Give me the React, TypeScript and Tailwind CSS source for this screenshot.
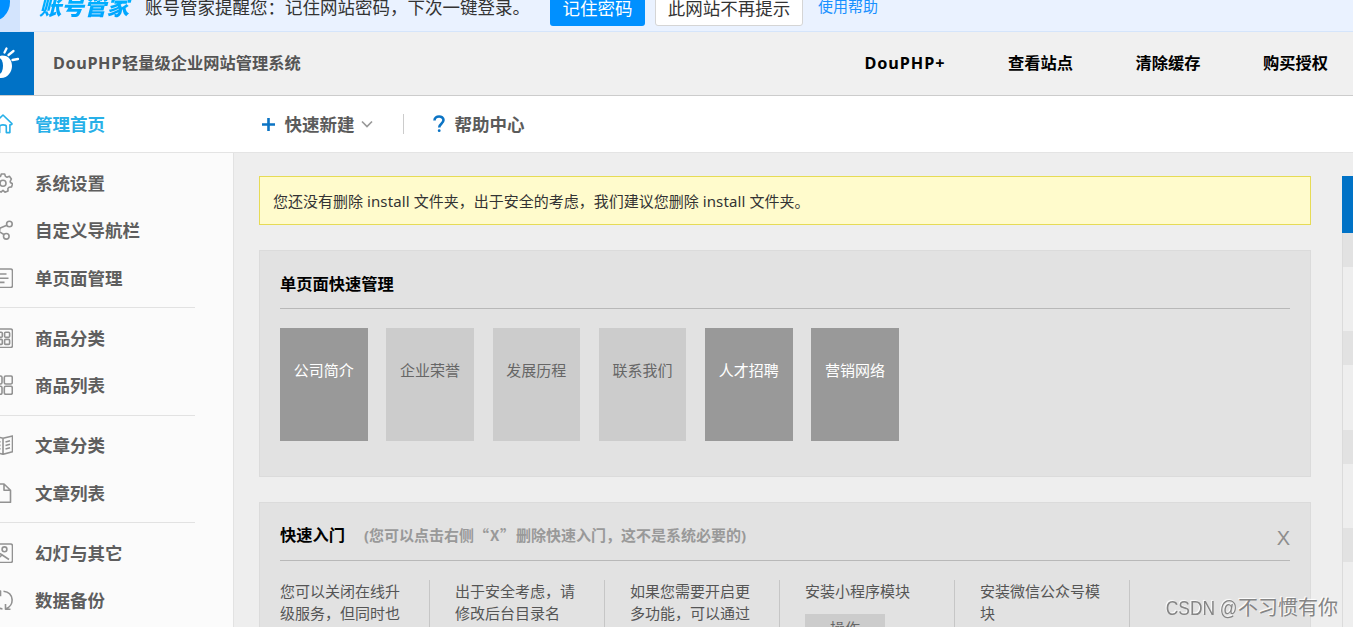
import type { ReactNode } from "react";

type MenuItem = { label: string; icon: ReactNode };

const icons = {
  home: <path d="M1.2 9.6 10 1l8.9 8.6c.3 1-.6 1.4-2 1.300v7.700h-3.600v-6.200c0-2-6.600-2-6.600 0v6.200H3.100v-7.700c-1.400.1-2.300-.3-1.900-1.300Z" />,
  gear: (
    <>
      <path d="M8.300 1h3.400l.7 2.400 1.600.8 2.400-.9 2 2.600-1.200 2.400.2 1.200 2.100 1.300-.9 3.100-2.500.3-1.200 1.300.1 2.500-3 1.200L10 17.300 8 19.100l-3-1.200.1-2.500-1.200-1.300-2.500-.3-.9-3.100 2.100-1.300.2-1.200L1.600 5.900l2-2.600 2.400.9 1.600-.8Z" />
      <circle cx="10" cy="10.200" r="3" />
    </>
  ),
  share: (
    <>
      <circle cx="16.400" cy="4" r="2.800" />
      <circle cx="13.300" cy="16.300" r="2.800" />
      <circle cx="4" cy="9.500" r="2.800" />
      <path d="m13.800 5.200-7.200 3M6 11.500l5.300 3.200" />
    </>
  ),
  page: (
    <>
      <rect x="1" y="1" width="18.500" height="18.500" rx="2" />
      <path d="M4.500 6h9M4.500 10.200h11M4.500 14.400h7" />
    </>
  ),
  category: (
    <>
      <rect x="1" y="1" width="18.500" height="18.500" rx="2" />
      <rect x="4.300" y="4.300" width="5" height="5" rx="1" />
      <rect x="11.600" y="4.300" width="5" height="5" rx="1" />
      <rect x="4.300" y="11.400" width="5" height="5" rx="1" />
      <rect x="11.600" y="11.400" width="5" height="5" rx="1" />
    </>
  ),
  grid: (
    <>
      <rect x="1" y="1" width="8" height="8" rx="1.500" />
      <rect x="11.300" y="1" width="8" height="8" rx="1.500" />
      <rect x="1" y="11.300" width="8" height="8" rx="1.500" />
      <rect x="11.300" y="11.300" width="8" height="8" rx="1.500" />
    </>
  ),
  book: (
    <>
      <path d="M10 3.200 19.500 1v15.800L10 19.300.5 16.800V1L10 3.200Zm0 0v16" />
      <path d="m12.500 7 4.500-1.200M12.500 10.500 17 9.300M12.500 14l4.500-1.200M7.500 7 3 5.800M7.500 10.500 3 9.300M7.500 14 3 12.800" />
    </>
  ),
  file: <path d="M2.500 1H11l6.500 6.300v12h-15V1Zm8.500 0v6.300h6.500" />,
  image: (
    <>
      <rect x="1" y="1" width="18.500" height="18.500" rx="2" />
      <circle cx="11.500" cy="6.300" r="2.400" />
      <path d="m3.500 8.500 5 3 7.500 5M9 12l-5.500 4.500" />
    </>
  ),
  sync: <path d="M10.500 1.200c11 1.500 11 14.500 2.500 17.500M12.500 14v5.200h5M9.500 19c-11-1.500-11-14.500-2.500-17.500M7.500 6.200V1h-5" />,
};

const groups: MenuItem[][] = [
  [
    { label: "系统设置", icon: icons.gear },
    { label: "自定义导航栏", icon: icons.share },
    { label: "单页面管理", icon: icons.page },
  ],
  [
    { label: "商品分类", icon: icons.category },
    { label: "商品列表", icon: icons.grid },
  ],
  [
    { label: "文章分类", icon: icons.book },
    { label: "文章列表", icon: icons.file },
  ],
  [
    { label: "幻灯与其它", icon: icons.image },
    { label: "数据备份", icon: icons.sync },
  ],
];

const pages = [
  { name: "公司简介", top: true },
  { name: "企业荣誉", top: false },
  { name: "发展历程", top: false },
  { name: "联系我们", top: false },
  { name: "人才招聘", top: true },
  { name: "营销网络", top: true },
];

const guides = [
  { lines: ["您可以关闭在线升", "级服务，但同时也"] },
  { lines: ["出于安全考虑，请", "修改后台目录名"] },
  { lines: ["如果您需要开启更", "多功能，可以通过"] },
  { lines: ["安装小程序模块"], action: "操作" },
  { lines: ["安装微信公众号模", "块"] },
];

function MenuIcon({ children }: { children: ReactNode }) {
  return (
    <svg
      className="-ml-[7px] mr-[22px] h-5 w-5 shrink-0"
      viewBox="0 0 20 20"
      fill="none"
      stroke="currentColor"
      strokeWidth="1.6"
      strokeLinejoin="round"
    >
      {children}
    </svg>
  );
}

function PasswordBar() {
  return (
    <div className="flex h-8 shrink-0 overflow-hidden border-b border-[#d5e5fb] bg-[#eaf2ff]">
      <div className="h-8 w-5 shrink-0 bg-[#d3e4fd]">
        <div className="-ml-[30px] -mt-[18px] h-10 w-10 rounded-full bg-[#0090ff]" />
      </div>
      <div className="-mt-[9px] ml-[19px] w-[106px] bg-gradient-to-b from-[#00b7ff] to-[#0099ff] bg-clip-text text-[22.5px] leading-[32px] font-black text-transparent italic">
        账号管家
      </div>
      <div className="-mt-[10px] w-[405px] text-[17.5px] leading-[34px] whitespace-nowrap text-[#333]">
        账号管家提醒您：记住网站密码，下次一键登录。
      </div>
      <button className="-mt-[10px] h-9 w-[95px] rounded-[3px] bg-[#0090ff] text-[17.5px] leading-[34px] text-white">
        记住密码
      </button>
      <button className="-mt-[10px] ml-[10px] h-9 w-[148px] rounded-[3px] border border-[#d5d5d5] bg-white text-[17.5px] leading-[32px] text-[#333]">
        此网站不再提示
      </button>
      <a className="-mt-[10px] ml-[15px] text-[15px] leading-[32px] text-[#1890ff]">使用帮助</a>
    </div>
  );
}

function Header() {
  return (
    <header className="flex h-16 shrink-0 items-center border-b border-[#ccc] bg-[#f0f0f0] text-[16.25px] font-bold">
      <div className="h-full w-[34px] bg-[#0072c6]">
        <svg className="h-[63px] w-[34px]" viewBox="0 0 34 63" fill="none" stroke="#fff">
          <path d="M-6 30a10 10 0 0 1 8-6.500c7 0 10 5 10 10.500S8 46 1 46a13 13 0 0 1-7-2" fill="#fff" stroke="none" />
          <ellipse cx="-1" cy="34" rx="4" ry="8" fill="#0072c6" stroke="none" />
          <path d="m4.500 20.500 2-4M8.500 23l5-4M12.500 28l5.500-1" strokeWidth="2.300" strokeLinecap="round" />
        </svg>
      </div>
      <div className="ml-[19px] text-[#555]">
        <span className="inline-block w-[69px] tracking-[0.6px] whitespace-nowrap">DouPHP</span>轻量级企业网站管理系统
      </div>
      <nav className="mr-[25px] ml-auto flex gap-[62.5px] text-black">
        <a className="w-[81px] whitespace-nowrap tracking-[0.9px]">DouPHP+</a>
        <a>查看站点</a>
        <a>清除缓存</a>
        <a>购买授权</a>
      </nav>
    </header>
  );
}

function Toolbar() {
  return (
    <div className="flex h-[57px] shrink-0 items-center border-b border-[#e4e4e4] bg-white text-[17.5px] font-bold text-[#5b5b5b]">
      <div className="flex w-[261px] items-center text-[#28b0e8]">
        <MenuIcon>{icons.home}</MenuIcon>
        管理首页
      </div>
      <svg className="h-[15px] w-[15px]" viewBox="0 0 15 15" stroke="#0c74c4" strokeWidth="2.600">
        <path d="M7.500 1v13M1 7.500h13" />
      </svg>
      <span className="ml-[8.500px]">快速新建</span>
      <svg className="ml-[6.500px] h-[10px] w-3" viewBox="0 0 12 10" fill="none" stroke="#999" strokeWidth="1.700">
        <path d="m1 2.500 5 5 5-5" />
      </svg>
      <div className="ml-[30px] h-5 w-px bg-[#ccc]" />
      <svg className="ml-[29px] h-[18px] w-3" viewBox="0 0 12 18" fill="none" stroke="#0c74c4" strokeWidth="2.600">
        <path d="M1.500 5.500c0-5.300 9-5.300 9-.4 0 3.600-4.300 3.500-4.300 7.300" />
        <circle cx="6.200" cy="15.700" r="1.400" fill="#0c74c4" stroke="none" />
      </svg>
      <span className="ml-[9.500px]">帮助中心</span>
    </div>
  );
}

function Sidebar() {
  return (
    <aside className="w-[234px] shrink-0 border-r border-[#e2e2e2] bg-[#fbfbfb] text-[17.5px] font-bold text-[#5e5e5e]">
      {groups.map((group, i) => (
        <ul key={i} className="w-[195px] border-b border-[#e2e2e2] pt-[6px] pb-[5.5px]">
          {group.map((item) => (
            <li key={item.label} className="flex h-[47.5px] items-center">
              <span className="flex text-[#929292]">
                <MenuIcon>{item.icon}</MenuIcon>
              </span>
              {item.label}
            </li>
          ))}
        </ul>
      ))}
    </aside>
  );
}

export default function App() {
  return (
    <div className="relative flex h-[627px] w-[1353px] flex-col overflow-hidden bg-[#eee] font-['Noto_Sans','Noto_Sans_CJK_SC',sans-serif]">
      <PasswordBar />
      <Header />
      <Toolbar />
      <div className="flex min-h-0 flex-1 overflow-hidden">
        <Sidebar />
        <main className="ml-[25px] w-[1052px] shrink-0 pt-[23px]">
          <div className="h-[49px] border border-[#e6db55] bg-[#fffbcc] pl-[13px] text-[15px] leading-[48px] text-[#333]">
            您还没有删除 <span className="tracking-[0.15px]">install</span> 文件夹，出于安全的考虑，我们建议您删除{" "}
            <span className="tracking-[0.15px]">install</span> 文件夹。
          </div>

          <section className="mt-[25px] h-[227px] border border-[#dbdbdb] bg-[#e2e2e2] px-5">
            <h2 className="h-[58px] border-b border-[#b8b8b8] text-[16.25px] leading-[66px] font-bold text-black">
              单页面快速管理
            </h2>
            <div className="mt-[19px] flex gap-[18.75px] text-[15px]">
              {pages.map((page) => (
                <a
                  key={page.name}
                  className={
                    "h-[113px] w-[87.5px] pt-[31px] text-center leading-[22px] " +
                    (page.top ? "bg-[#999] text-white" : "bg-[#ccc] text-[#666]")
                  }
                >
                  {page.name}
                </a>
              ))}
            </div>
          </section>

          <section className="mt-[25px] h-[227px] border border-[#dbdbdb] bg-[#e2e2e2] px-5">
            <div className="flex h-[58px] border-b border-[#b8b8b8] font-bold">
              <h2 className="text-[16.25px] leading-[65px] text-black">快速入门</h2>
              <em className="ml-[19px] text-[15px] leading-[64px] text-[#999] not-italic">
                (您可以点击右侧
                <span className="font-['Noto_Sans_CJK_SC',sans-serif] leading-none tracking-[0.8px]">“X”</span>
                删除快速入门，这不是系统必要的)
              </em>
              <a className="ml-auto font-['Liberation_Sans',sans-serif] text-[20px] leading-[70px] font-normal text-[#8e8e8e]">
                X
              </a>
            </div>
            <div className="mt-[19px] flex gap-[25px] text-[15px] leading-[22px] text-[#555]">
              {guides.map((guide) => (
                <div key={guide.lines[0]} className="h-[120px] w-[150px] border-r border-[#c6c6c6]">
                  {guide.lines.map((line) => (
                    <p key={line} className="whitespace-nowrap">
                      {line}
                    </p>
                  ))}
                  {guide.action && (
                    <button className="mt-[12px] h-[27px] w-20 bg-[#ccc] text-[15px] leading-[22px] text-[#666]">
                      {guide.action}
                    </button>
                  )}
                </div>
              ))}
            </div>
          </section>
        </main>
        <div className="mt-[23px] ml-[31px] flex w-[11px] shrink-0 flex-col">
          <div className="h-[57px] shrink-0 bg-[#0072c6]" />
          <div className="flex-1 border-l border-[#dbdbdb]">
            {[0, 1, 2, 3].map((n) => (
              <div key={n} className="h-[98.4px]">
                <div className="h-[34px] bg-[#e2e2e2]" />
              </div>
            ))}
          </div>
        </div>
      </div>
      <div className="absolute right-[15px] bottom-[4px] font-['Liberation_Sans','Noto_Sans_CJK_SC',sans-serif] text-[20px] leading-[30px] whitespace-nowrap text-[#858585] [text-shadow:-1px_-1px_1px_#fff]">
        <span className="inline-block origin-right scale-x-[0.87]">CSDN @</span>不习惯有你
      </div>
    </div>
  );
}
